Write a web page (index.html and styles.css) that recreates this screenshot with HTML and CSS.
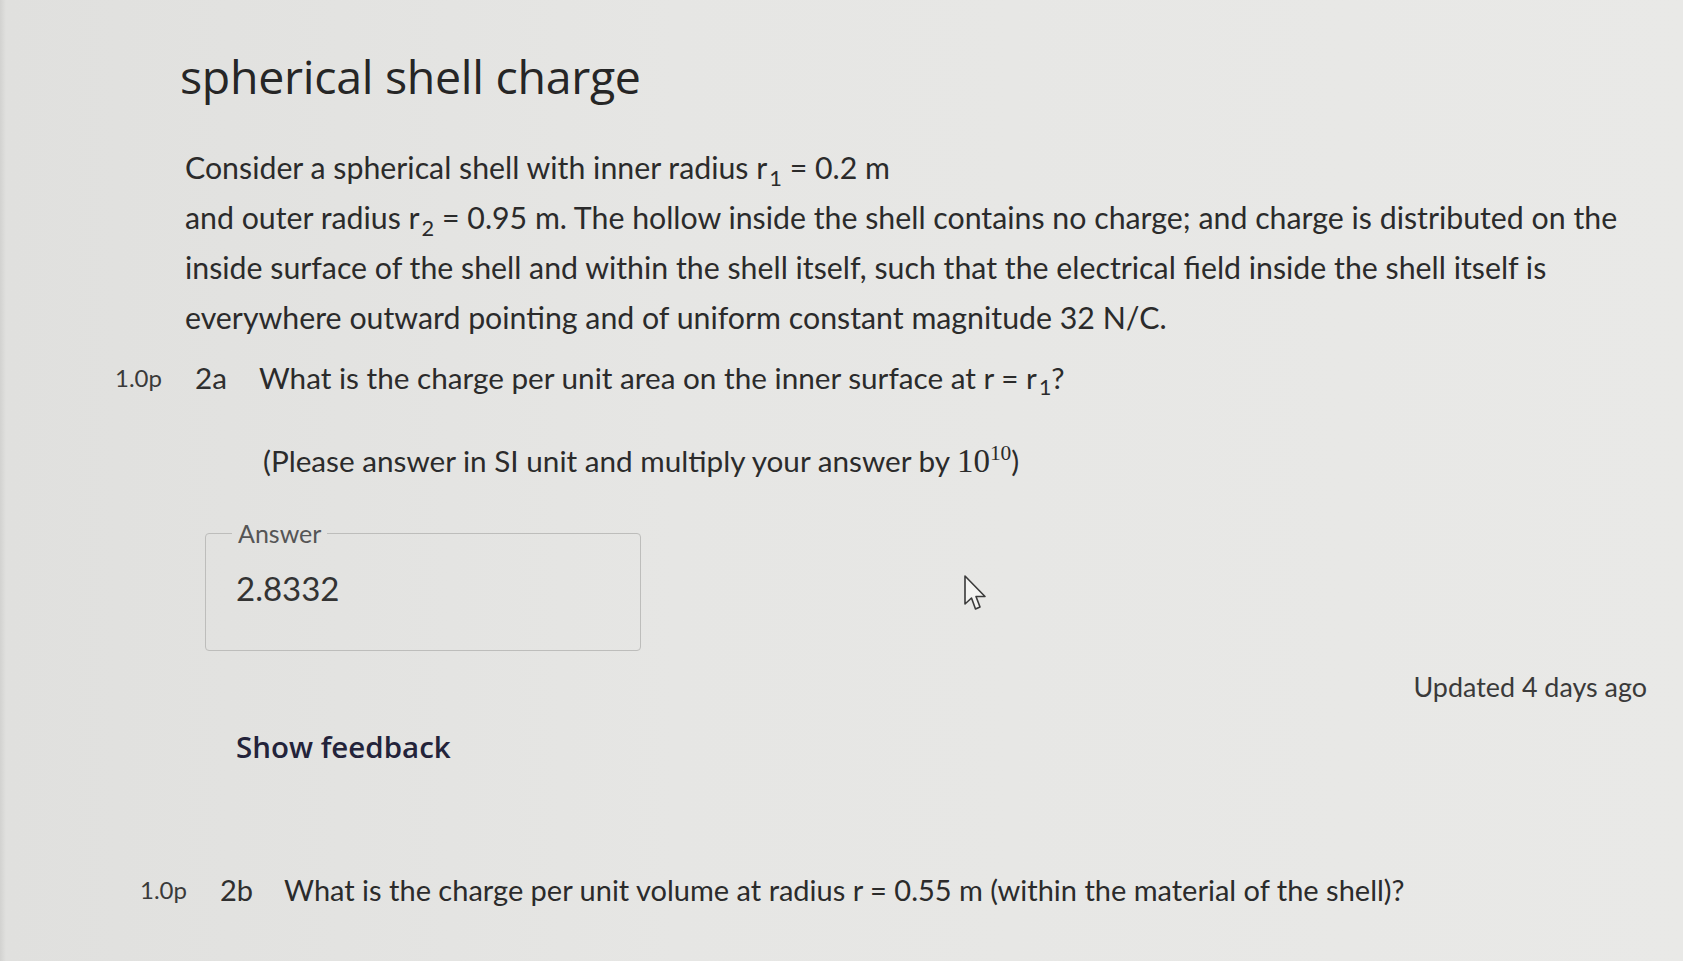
FILE: index.html
```html
<!DOCTYPE html>
<html>
<head>
<meta charset="utf-8">
<link rel="stylesheet" href="styles.css">
</head>
<body>
<div class="page">
  <h1 class="title">spherical shell charge</h1>
  <div class="intro">
    <p class="line">Consider a spherical shell with inner radius r<sub>1</sub> = 0.2 m</p>
    <p class="line">and outer radius r<sub>2</sub> = 0.95 m. The hollow inside the shell contains no charge; and charge is distributed on the inside surface of the shell and within the shell itself, such that the electrical field inside the shell itself is everywhere outward pointing and of uniform constant magnitude 32 N/C.</p>
  </div>

  <div class="question">
    <div class="points">1.0p</div>
    <div class="qnum">2a</div>
    <div class="qbody">
      <p class="qtext">What is the charge per unit area on the inner surface at r = r<sub>1</sub>?</p>
      <p class="note">(Please answer in SI unit and multiply your answer by <span class="math">10<sup>10</sup></span>)</p>
      <fieldset class="answer">
        <legend>Answer</legend>
        <div class="value">2.8332</div>
      </fieldset>
      <div class="cursor">
        <svg width="26" height="38" viewBox="0 0 26 38"><path d="M2 2 L2 30 L8.5 24 L12.5 35 L17 33 L13 22.5 L22 22.5 Z" fill="#f4f4f2" stroke="#3a3a3a" stroke-width="1.6" stroke-linejoin="round"/></svg>
      </div>
      <div class="updated">Updated 4 days ago</div>
      <div class="feedback">Show feedback</div>
    </div>
  </div>

  <div class="question q2">
    <div class="points">1.0p</div>
    <div class="qnum">2b</div>
    <div class="qbody">
      <p class="qtext">What is the charge per unit volume at radius r = 0.55 m (within the material of the shell)?</p>
    </div>
  </div>
</div>
</body>
</html>
```

FILE: styles.css
```css
html, body {
  margin: 0;
  padding: 0;
  height: 100%;
}
body {
  background: linear-gradient(90deg, #d2d2d0 0px, #e0e0de 6px, #e6e6e4 40%, #e9e9e7 100%);
  color: #2b2b2b;
  font-family: Lato, "Open Sans", sans-serif;
  overflow: hidden;
}
.page {
  padding: 48px 0 0 0;
  width: 1683px;
  height: 961px;
  box-sizing: border-box;
  position: relative;
}
.title {
  margin: 0 0 0 180px;
  font-family: "Open Sans", Lato, sans-serif;
  font-weight: 500;
  font-size: 46.5px;
  line-height: 56px;
  color: #262626;
  letter-spacing: -0.3px;
}
.intro {
  margin: 38px 0 0 185px;
  width: 1470px;
  font-size: 30.3px;
  line-height: 50px;
}
.line {
  margin: 0;
}
sub {
  font-size: 0.72em;
  line-height: 1;
  vertical-align: baseline;
  position: relative;
  top: 0.3em;
  margin-left: 2px;
}
.question {
  display: grid;
  grid-template-columns: 80px 64px 1fr;
  margin: 10px 0 0 115px;
  font-size: 29.7px;
  line-height: 51px;
}
.points {
  font-size: 24px;
  color: #3a3a3a;
}
.qnum {
  color: #2f2f2f;
}
.qtext {
  margin: 0;
}
.qbody {
  position: relative;
}
.note {
  margin: 32px 0 0 4px;
}
.math {
  font-family: "Liberation Serif", "DejaVu Serif", serif;
  font-size: 33px;
}
.math sup {
  font-size: 0.65em;
  vertical-align: 0.55em;
  line-height: 0;
}
.answer {
  margin: 34px 0 0 -54px;
  width: 436px;
  height: 130px;
  box-sizing: border-box;
  border: 1.5px solid #bdbdbb;
  border-radius: 4px;
  padding: 0 0 0 30px;
}
.answer legend {
  font-size: 25px;
  line-height: 24px;
  color: #555;
  padding: 0 6px;
  margin-left: -4px;
}
.value {
  font-size: 33px;
  line-height: 40px;
  margin-top: 23px;
  color: #333;
}
.cursor {
  position: absolute;
  left: 704px;
  top: 222px;
}
.updated {
  margin: 10px 0 0 0;
  text-align: right;
  width: 1388px;
  font-size: 26.9px;
  color: #3a3a3a;
}
.feedback {
  margin: 15px 0 0 -23px;
  font-family: "Open Sans", Lato, sans-serif;
  font-weight: 600;
  font-size: 29.5px;
  line-height: 40px;
  color: #23233a;
}
.q2 {
  margin: 97px 0 0 140px;
  font-size: 29px;
}
```
